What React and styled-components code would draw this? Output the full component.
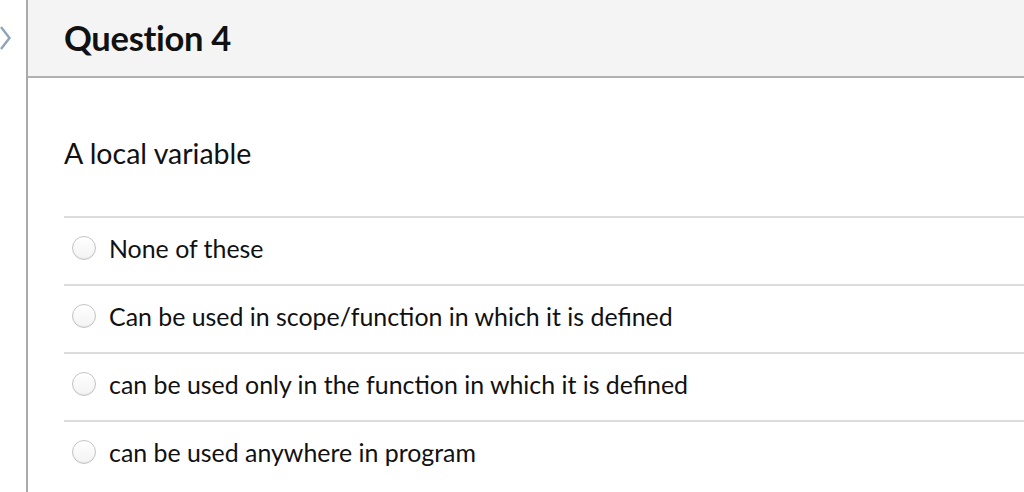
import styled, { createGlobalStyle } from "styled-components";

const Global = createGlobalStyle`
  html, body { margin: 0; padding: 0; background: #fff; }
  body { font-family: Lato, "Liberation Sans", sans-serif; color: #111; }
`;

const Page = styled.div`
  display: flex;
  height: 492px;
  overflow: hidden;
`;

const Gutter = styled.div`
  width: 26px;
  flex-shrink: 0;
  padding-top: 26px;
  border-right: 2px solid #aaa;
`;

const Main = styled.div`
  flex: 1;
  display: flex;
  flex-direction: column;
`;

const Header = styled.div`
  height: 76px;
  background: #f4f4f4;
  border-bottom: 2px solid #b1b1b1;
  display: flex;
  align-items: center;
  padding-left: 36px;
`;

const Title = styled.h2`
  margin: 0;
  font-size: 34.5px;
  font-weight: 700;
  letter-spacing: -0.3px;
  padding-bottom: 2px;
`;

const Body = styled.div`
  padding: 58px 0 0 36px;
`;

const Prompt = styled.p`
  margin: 0 0 46px;
  font-size: 28.5px;
  line-height: 34px;
`;

const Answers = styled.ul`
  list-style: none;
  margin: 0;
  padding: 0;
`;

const Answer = styled.li`
  box-sizing: border-box;
  height: 68px;
  border-top: 2px solid #dcdcdc;
  display: flex;
  align-items: center;
  gap: 13px;
  padding: 0 0 7px 8px;
`;

const Radio = styled.span`
  width: 22px;
  height: 22px;
  border-radius: 50%;
  border: 1px solid #c4c4c4;
  background: linear-gradient(#fff, #f3f3f3);
  box-shadow: inset 0 -1px 1px rgba(0, 0, 0, 0.06);
  flex-shrink: 0;
`;

const Label = styled.span`
  font-size: 24.9px;
  line-height: 30px;
`;

const answers = [
  "None of these",
  "Can be used in scope/function in which it is defined",
  "can be used only in the function in which it is defined",
  "can be used anywhere in program",
];

export default function App() {
  return (
    <>
      <Global />
      <Page>
        <Gutter>
          <svg width="12" height="24" viewBox="0 0 12 24">
            <path d="M1 1 L9.5 12 L1 23" fill="none" stroke="#8ea6bb" strokeWidth="2.4" />
          </svg>
        </Gutter>
        <Main>
          <Header>
            <Title>Question 4</Title>
          </Header>
          <Body>
            <Prompt>A local variable</Prompt>
            <Answers>
              {answers.map((a) => (
                <Answer key={a}>
                  <Radio />
                  <Label>{a}</Label>
                </Answer>
              ))}
            </Answers>
          </Body>
        </Main>
      </Page>
    </>
  );
}
